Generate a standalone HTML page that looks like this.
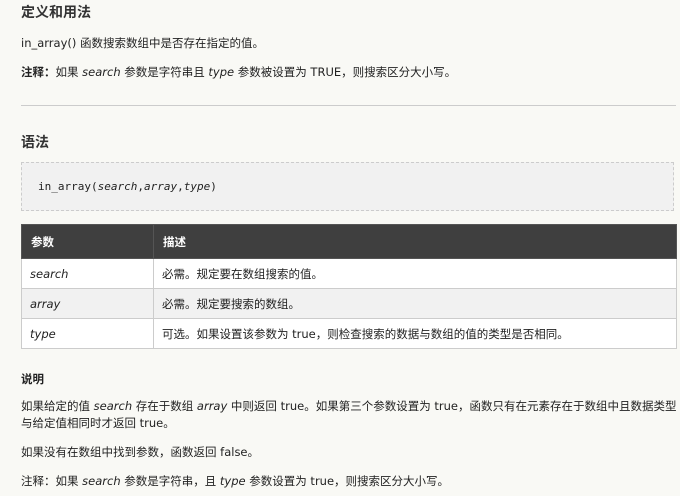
<!DOCTYPE html>
<html><head><meta charset="utf-8"><style>
body{margin:0;width:680px;height:496px;background:#f9f9f5;font-family:"DejaVu Sans","Noto Sans CJK SC",sans-serif;font-size:11.5px;color:#222;position:relative;overflow:hidden}
.a{position:absolute;left:21px;white-space:nowrap}
h2{margin:0;font-size:14px;font-weight:bold;color:#333}
i{font-style:italic}
.hr{position:absolute;left:21px;width:655px;top:105px;height:1px;background:#ccc}
.code{position:absolute;left:21px;top:162px;width:651px;height:47px;background:#f1f1f1;border:1px dashed #ccc;font-family:"DejaVu Sans Mono",monospace;font-size:11px}
.code span{position:absolute;left:16px;top:17px}
table{position:absolute;left:21px;top:224px;width:656px;border-collapse:collapse;font-size:11.5px}
th{background:#3f3f3f;color:#fff;text-align:left;height:33px;padding:0 9px;font-weight:bold;border:1px solid #555}
td{height:29px;padding:0 8px;border:1px solid #ccc;background:#fff}
tr.g td{background:#f1f1f1}
</style></head><body>
<div class="a" style="top:2px"><h2>定义和用法</h2></div>
<div class="a" style="top:35px">in_array() 函数搜索数组中是否存在指定的值。</div>
<div class="a" style="top:64px"><b>注释：</b>如果 <i>search</i> 参数是字符串且 <i>type</i> 参数被设置为 TRUE，则搜索区分大小写。</div>
<div class="hr"></div>
<div class="a" style="top:132px"><h2>语法</h2></div>
<div class="code"><span>in_array(<i>search</i>,<i>array</i>,<i>type</i>)</span></div>
<table>
<tr><th style="width:113px">参数</th><th>描述</th></tr>
<tr><td><i>search</i></td><td>必需。规定要在数组搜索的值。</td></tr>
<tr class="g"><td><i>array</i></td><td>必需。规定要搜索的数组。</td></tr>
<tr><td><i>type</i></td><td>可选。如果设置该参数为 true，则检查搜索的数据与数组的值的类型是否相同。</td></tr>
</table>
<div class="a" style="top:371px;font-weight:bold">说明</div>
<div class="a" style="top:398px;line-height:17px">如果给定的值 <i>search</i> 存在于数组 <i>array</i> 中则返回 true。如果第三个参数设置为 true，函数只有在元素存在于数组中且数据类型<br>与给定值相同时才返回 true。</div>
<div class="a" style="top:444px">如果没有在数组中找到参数，函数返回 false。</div>
<div class="a" style="top:473px">注释：如果 <i>search</i> 参数是字符串，且 <i>type</i> 参数设置为 true，则搜索区分大小写。</div>
</body></html>
